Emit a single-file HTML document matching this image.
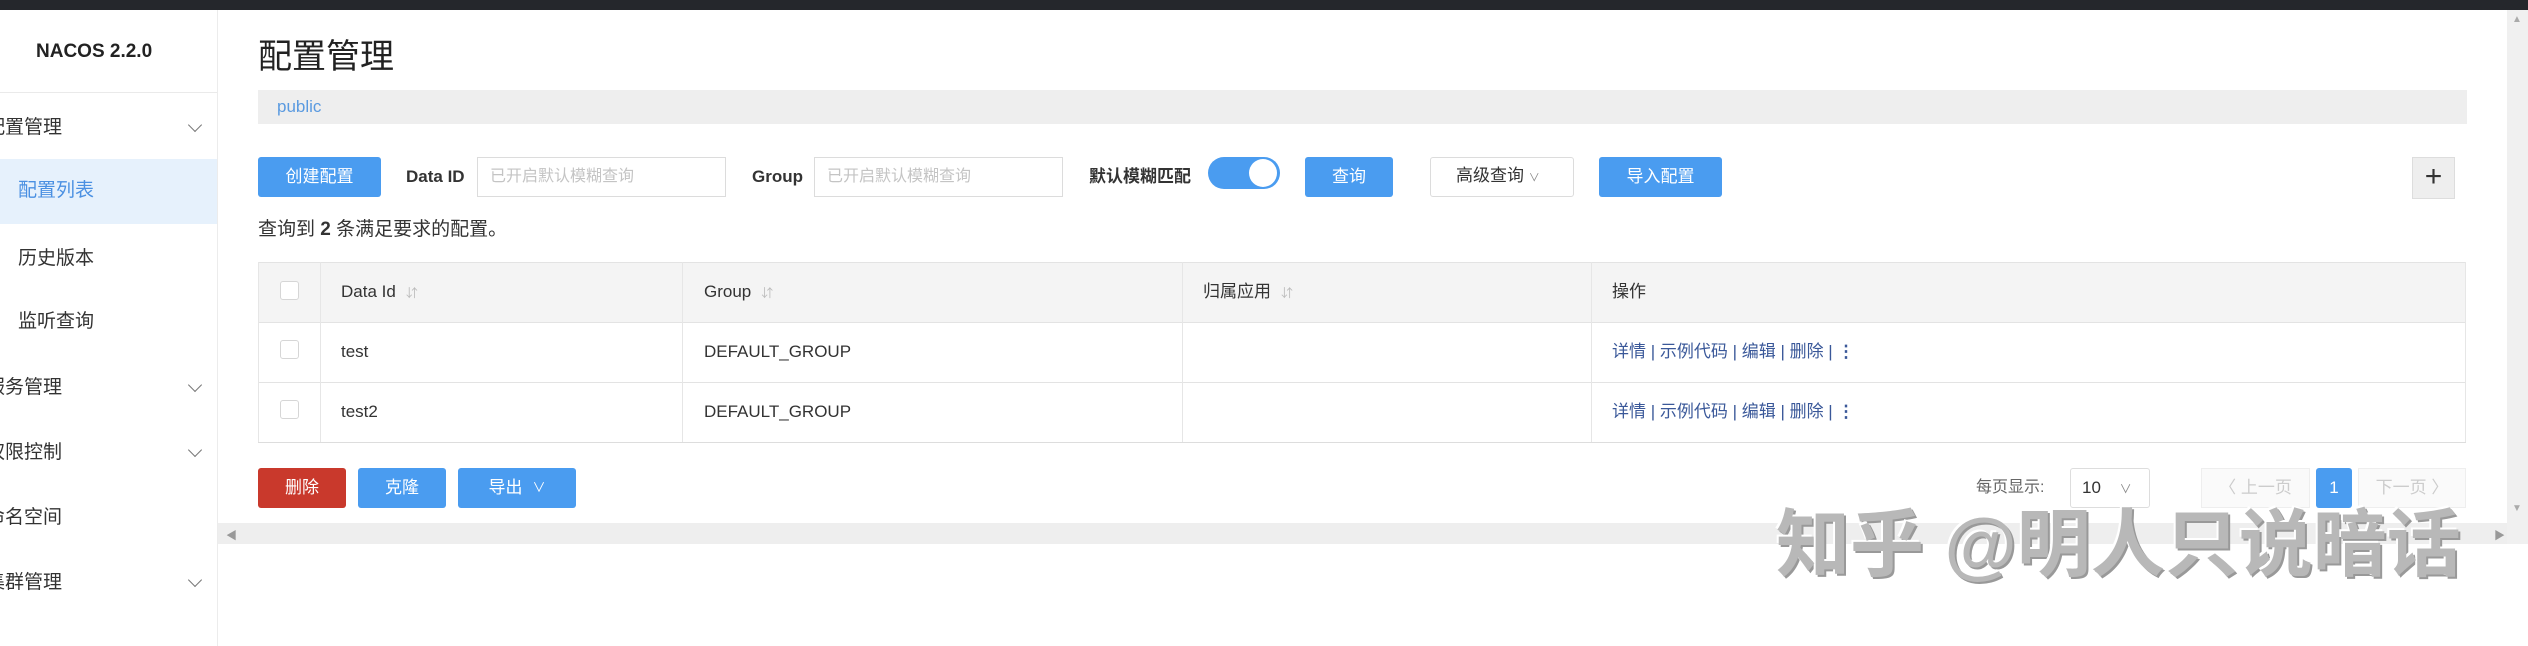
<!DOCTYPE html>
<html><head><meta charset="utf-8"><style>
*{margin:0;padding:0;box-sizing:border-box}
body{width:2528px;height:646px;overflow:hidden;background:#fff;font-family:"Liberation Sans","Noto Sans CJK SC",sans-serif;color:#333;position:relative}
.a{position:absolute;white-space:nowrap}
.btn{position:absolute;background:#4a9cf0;color:#fff;font-size:17px;line-height:20px;display:flex;align-items:center;justify-content:center;border-radius:3px}
.inp{position:absolute;border:1px solid #dcdcdc;height:40px;top:157px;font-size:16px;color:#c4c4c4;padding:0 12px;line-height:38px}
.nav{position:absolute;left:0;font-size:19px;color:#333;line-height:20px}
.chev{position:absolute;left:190px;width:10px;height:10px;border-right:1.5px solid #777;border-bottom:1.5px solid #777;transform:rotate(45deg)}
.vl{position:absolute;width:1px;background:#e6e6e6}
.hl{position:absolute;height:1px;background:#e3e3e3;left:258px;width:2208px}
.cb{position:absolute;left:280px;width:19px;height:19px;border:1px solid #d6d6d6;border-radius:3px;background:#fff}
.txt{position:absolute;font-size:17px;color:#333;line-height:20px;white-space:nowrap}
.sort{color:#bbb;font-size:12px;margin-left:10px}
.ops{position:absolute;left:1612px;font-size:17px;color:#3a5899;line-height:20px;white-space:nowrap}
</style></head><body>
<div class="a" style="left:0;top:0;width:2528px;height:10px;background:#25272c"></div>
<div class="a" style="left:217px;top:10px;width:1px;height:636px;background:#ececec"></div>
<div class="a" style="left:36px;top:41px;font-size:19px;line-height:22px;font-weight:bold;color:#222">NACOS 2.2.0</div>
<div class="a" style="left:0;top:92px;width:217px;height:1px;background:#eaeaea"></div>
<div class="nav" style="left:-14px;top:118px">配置管理</div><div class="chev" style="top:120px"></div>
<div class="a" style="left:0;top:159px;width:217px;height:65px;background:#e6f1fc"></div>
<div class="nav" style="left:18px;top:181px;color:#4a90e2">配置列表</div>
<div class="nav" style="left:18px;top:249px">历史版本</div>
<div class="nav" style="left:18px;top:312px">监听查询</div>
<div class="nav" style="left:-14px;top:378px">服务管理</div><div class="chev" style="top:380px"></div>
<div class="nav" style="left:-14px;top:443px">权限控制</div><div class="chev" style="top:445px"></div>
<div class="nav" style="left:-14px;top:508px">命名空间</div>
<div class="nav" style="left:-14px;top:573px">集群管理</div><div class="chev" style="top:575px"></div>
<div class="a" style="left:258px;top:40px;font-size:34px;line-height:34px;color:#222">配置管理</div>
<div class="a" style="left:258px;top:90px;width:2209px;height:34px;background:#eeeeee"></div>
<div class="a" style="left:277px;top:97px;font-size:17px;line-height:20px;color:#5a9ae0">public</div>
<div class="btn" style="left:258px;top:157px;width:123px;height:40px">创建配置</div>
<div class="a" style="left:406px;top:167px;font-size:17px;line-height:20px;font-weight:bold;color:#333">Data ID</div>
<div class="inp" style="left:477px;width:249px">已开启默认模糊查询</div>
<div class="a" style="left:752px;top:167px;font-size:17px;line-height:20px;font-weight:bold;color:#333">Group</div>
<div class="inp" style="left:814px;width:249px">已开启默认模糊查询</div>
<div class="a" style="left:1089px;top:167px;font-size:17px;line-height:20px;font-weight:bold;color:#333">默认模糊匹配</div>
<div class="a" style="left:1208px;top:157px;width:72px;height:32px;border-radius:16px;background:#4a9cf0"></div>
<div class="a" style="left:1249px;top:159px;width:28px;height:28px;border-radius:14px;background:#fff"></div>
<div class="btn" style="left:1305px;top:157px;width:88px;height:40px">查询</div>
<div class="a" style="left:1430px;top:157px;width:144px;height:40px;border:1px solid #dcdcdc;border-radius:3px;font-size:17px;line-height:20px;color:#333;padding:8px 0 0 25px">高级查询 <span style="font-size:11px;color:#888">∨</span></div>
<div class="btn" style="left:1599px;top:157px;width:123px;height:40px">导入配置</div>
<div class="a" style="left:2412px;top:157px;width:43px;height:42px;background:#eeeeee;border:1px solid #ddd;font-size:30px;font-weight:200;color:#333;text-align:center;line-height:38px">+</div>
<div class="a" style="left:258px;top:219px;font-size:19px;line-height:22px;color:#333">查询到 <b>2</b> 条满足要求的配置。</div>
<div class="a" style="left:258px;top:262px;width:2208px;height:60px;background:#f4f4f4"></div>
<div class="hl" style="top:262px"></div><div class="hl" style="top:322px"></div><div class="hl" style="top:382px"></div><div class="hl" style="top:442px;background:#ddd"></div>
<div class="vl" style="left:258px;top:262px;height:180px"></div>
<div class="vl" style="left:320px;top:262px;height:180px"></div>
<div class="vl" style="left:682px;top:262px;height:180px"></div>
<div class="vl" style="left:1182px;top:262px;height:180px"></div>
<div class="vl" style="left:1591px;top:262px;height:180px"></div>
<div class="vl" style="left:2465px;top:262px;height:180px"></div>
<div class="cb" style="top:281px"></div><div class="cb" style="top:340px"></div><div class="cb" style="top:400px"></div>
<div class="txt" style="left:341px;top:282px">Data Id<span class="sort">⇵</span></div>
<div class="txt" style="left:704px;top:282px">Group<span class="sort">⇵</span></div>
<div class="txt" style="left:1203px;top:282px">归属应用<span class="sort">⇵</span></div>
<div class="txt" style="left:1612px;top:282px">操作</div>
<div class="txt" style="left:341px;top:342px">test</div>
<div class="txt" style="left:704px;top:342px">DEFAULT_GROUP</div>
<div class="ops" style="top:342px">详情 | 示例代码 | 编辑 | 删除 | <b>⋮</b></div>
<div class="txt" style="left:341px;top:402px">test2</div>
<div class="txt" style="left:704px;top:402px">DEFAULT_GROUP</div>
<div class="ops" style="top:402px">详情 | 示例代码 | 编辑 | 删除 | <b>⋮</b></div>
<div class="btn" style="left:258px;top:468px;width:88px;height:40px;background:#c9392c">删除</div>
<div class="btn" style="left:358px;top:468px;width:88px;height:40px">克隆</div>
<div class="btn" style="left:458px;top:468px;width:118px;height:40px">导出 <span style="font-size:13px;margin-left:10px">∨</span></div>
<div class="a" style="left:1976px;top:478px;font-size:16px;line-height:20px;color:#666">每页显示:</div>
<div class="a" style="left:2070px;top:468px;width:80px;height:40px;border:1px solid #ddd;border-radius:3px;font-size:17px;line-height:20px;color:#333;padding:9px 0 0 11px">10 <span style="font-size:12px;color:#888;margin-left:14px">∨</span></div>
<div class="a" style="left:2201px;top:468px;width:109px;height:40px;border:1px solid #eee;background:#fafafa;font-size:17px;color:#ccc;text-align:center;line-height:38px">〈 上一页</div>
<div class="a" style="left:2316px;top:468px;width:36px;height:40px;background:#4a9cf0;border-radius:3px;font-size:17px;color:#fff;text-align:center;line-height:40px">1</div>
<div class="a" style="left:2358px;top:468px;width:108px;height:40px;border:1px solid #eee;background:#fafafa;font-size:17px;color:#ccc;text-align:center;line-height:38px">下一页 〉</div>
<div class="a" style="left:218px;top:523px;width:2289px;height:21px;background:#eeeeee"></div>
<div class="a" style="left:226px;top:527px;font-size:11px;color:#999">◀</div>
<div class="a" style="left:2494px;top:527px;font-size:11px;color:#999">▶</div>
<div class="a" style="left:2507px;top:10px;width:21px;height:534px;background:#f0f0f0"></div>
<div class="a" style="left:2512px;top:14px;font-size:10px;color:#aaa">▲</div>
<div class="a" style="left:2512px;top:503px;font-size:10px;color:#aaa">▼</div>
<div class="a" style="left:1776px;top:508px;font-size:74px;line-height:74px;font-weight:bold;color:#b8b8b8;text-shadow:-2px -2px 0 #fff,2px 2px 0 #999">知乎 @明人只说暗话</div>
</body></html>
